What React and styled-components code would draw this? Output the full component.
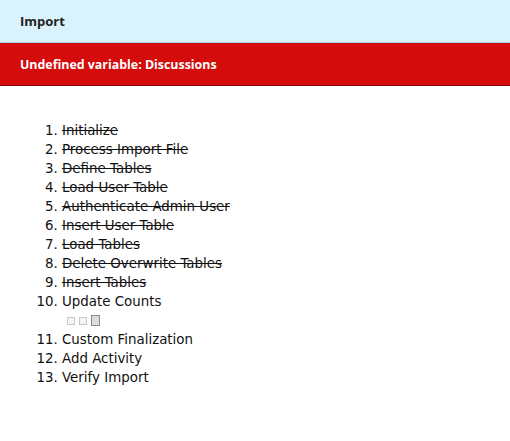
import React from "react";
import styled, { createGlobalStyle } from "styled-components";

const Global = createGlobalStyle`
  html, body { margin: 0; padding: 0; background: #fff; }
  body { font-family: "DejaVu Sans", "Liberation Sans", sans-serif; }
`;

const Header = styled.header`
  height: 42px;
  background: #d9f2fc;
  border-bottom: 1px solid #a8d4e8;
  display: flex;
  align-items: center;
  padding: 0 20px;
  font-family: "Open Sans", "DejaVu Sans", sans-serif;
  font-size: 13px;
  font-weight: bold;
  color: #222;
`;

const ErrorBar = styled.div`
  height: 42px;
  background: #d40c0c;
  border-bottom: 1px solid #8a0000;
  display: flex;
  align-items: center;
  padding: 0 20px;
  font-family: "Open Sans", "DejaVu Sans", sans-serif;
  font-size: 12.4px;
  font-weight: bold;
  color: #fff;
`;

const Steps = styled.ol`
  margin: 35px 0 0;
  padding: 0 0 0 62px;
  font-size: 13.4px;
  line-height: 19px;
  color: #111;
`;

const Step = styled.li`
  text-decoration: ${(p) => (p.$done ? "line-through" : "none")};
`;

const Progress = styled.div`
  height: 19px;
  display: flex;
  align-items: center;
  gap: 4px;
  padding-left: 5px;
`;

const Box = styled.span`
  box-sizing: border-box;
  width: ${(p) => (p.$active ? 9 : 8)}px;
  height: ${(p) => (p.$active ? 11 : 8)}px;
  border: 1px solid ${(p) => (p.$active ? "#8a8a8a" : "#c8c8c8")};
  background: ${(p) => (p.$active ? "#dcdcdc" : "#f4f4f4")};
`;

const steps = [
  ["Initialize", true],
  ["Process Import File", true],
  ["Define Tables", true],
  ["Load User Table", true],
  ["Authenticate Admin User", true],
  ["Insert User Table", true],
  ["Load Tables", true],
  ["Delete Overwrite Tables", true],
  ["Insert Tables", true],
  ["Update Counts", false, true],
  ["Custom Finalization", false],
  ["Add Activity", false],
  ["Verify Import", false],
];

export default function App() {
  return (
    <>
      <Global />
      <Header>Import</Header>
      <ErrorBar>Undefined variable: Discussions</ErrorBar>
      <Steps>
        {steps.map(([label, done, progress]) => (
          <Step key={label} $done={done}>
            {label}
            {progress && (
              <Progress>
                <Box />
                <Box />
                <Box $active />
              </Progress>
            )}
          </Step>
        ))}
      </Steps>
    </>
  );
}
